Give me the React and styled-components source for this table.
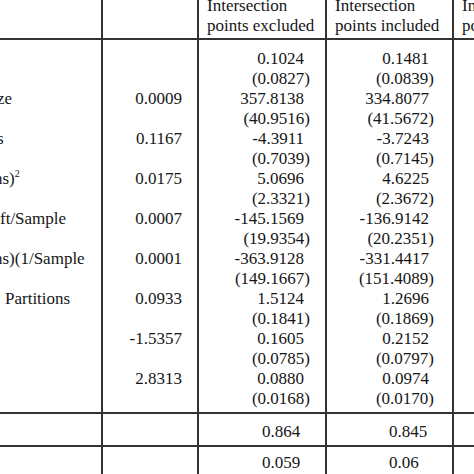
import React from 'react';
import styled, { createGlobalStyle } from 'styled-components';

const GlobalStyle = createGlobalStyle`
    *, *::before, *::after {
        box-sizing: border-box;
    }
    html, body {
        margin: 0;
        padding: 0;
        background: #fff;
        overflow: hidden;
    }
`

const COLS = '103px 96px 128px 127px 1fr';
const RULE = '2px solid #333';

const Page = styled.div`
    width: 474px;
    height: 474px;
    overflow: hidden;
    background: #fff;
    color: #161616;
    font-family: "Liberation Serif", "Times New Roman", serif;
    font-size: 17px;
    line-height: 20px;
`

const Row = styled.div`
    display: grid;
    grid-template-columns: ${COLS};
    grid-template-rows: minmax(0, 1fr);
    height: ${p => p.$h ? `${p.$h}px` : 'auto'};
    border-bottom: ${p => p.$rule ? RULE : 'none'};
    & > * {
        padding-top: ${p => p.$pt || 0}px;
        padding-bottom: ${p => p.$pb || 0}px;
    }
`

const Cell = styled.div`
    border-right: ${RULE};
    white-space: nowrap;
    overflow: hidden;
    &:last-child {
        border-right: none;
        overflow: visible;
    }
`

const HeadCell = styled(Cell)`
    display: flex;
    flex-direction: column;
    justify-content: flex-end;
    overflow: visible;
    padding-left: 8px;
    padding-bottom: 2px !important;
`

const Label = styled.div`
    height: 20px;
    margin-left: ${p => p.$shift || 0}px;
`

const Sup = styled.sup`
    font-size: 10px;
    line-height: 0;
    vertical-align: 7px;
`

const Num = styled.div`
    height: 20px;
    text-align: right;
    padding-right: ${p => p.$pr || 0}px;
`

const Stat = styled.div`
    padding-left: ${p => p.$pl || 0}px;
`

const rows = [
    { label: '', p: '', a: ['0.1024', '(0.0827)'], b: ['0.1481', '(0.0839)'] },
    { label: 'ze', shift: -3, p: '0.0009', a: ['357.8138', '(40.9516)'], b: ['334.8077', '(41.5672)'] },
    { label: 's', shift: -3, p: '0.1167', a: ['-4.3911', '(0.7039)'], b: ['-3.7243', '(0.7145)'] },
    { label: 'ns)', sup: '2', shift: -6, p: '0.0175', a: ['5.0696', '(2.3321)'], b: ['4.6225', '(2.3672)'] },
    { label: 'ft/Sample', shift: 0, p: '0.0007', a: ['-145.1569', '(19.9354)'], b: ['-136.9142', '(20.2351)'] },
    { label: 'ns)(1/Sample', shift: -6, p: '0.0001', a: ['-363.9128', '(149.1667)'], b: ['-331.4417', '(151.4089)'] },
    { label: 'Partitions', shift: 5, p: '0.0933', a: ['1.5124', '(0.1841)'], b: ['1.2696', '(0.1869)'] },
    { label: '', p: '-1.5357', a: ['0.1605', '(0.0785)'], b: ['0.2152', '(0.0797)'] },
    { label: '', p: '2.8313', a: ['0.0880', '(0.0168)'], b: ['0.0974', '(0.0170)'] },
];

function App() {
    return (
        <Page>
            <GlobalStyle />
            <Row $h={40} $rule>
                <HeadCell />
                <HeadCell />
                <HeadCell>
                    <div>Intersection</div>
                    <div>points excluded</div>
                </HeadCell>
                <HeadCell>
                    <div>Intersection</div>
                    <div>points included</div>
                </HeadCell>
                <HeadCell>
                    <div>Intersection</div>
                    <div>points</div>
                </HeadCell>
            </Row>

            {rows.map((r, i) => {
                const first = i === 0;
                const last = i === rows.length - 1;
                return (
                    <Row key={i} $pt={first ? 9 : 0} $pb={last ? 3 : 0} $rule={last}>
                        <Cell>
                            <Label $shift={r.shift}>
                                {r.label}
                                {r.sup && <Sup>{r.sup}</Sup>}
                            </Label>
                        </Cell>
                        <Cell>
                            <Num $pr={15}>{r.p}</Num>
                        </Cell>
                        <Cell>
                            <Num $pr={21}>{r.a[0]}</Num>
                            <Num $pr={15}>{r.a[1]}</Num>
                        </Cell>
                        <Cell>
                            <Num $pr={23}>{r.b[0]}</Num>
                            <Num $pr={18}>{r.b[1]}</Num>
                        </Cell>
                        <Cell />
                    </Row>
                );
            })}

            <Row $h={33} $pt={8} $rule>
                <Cell />
                <Cell />
                <Cell><Stat $pl={63}>0.864</Stat></Cell>
                <Cell><Stat $pl={62}>0.845</Stat></Cell>
                <Cell />
            </Row>
            <Row $h={40} $pt={6}>
                <Cell />
                <Cell />
                <Cell><Stat $pl={63}>0.059</Stat></Cell>
                <Cell><Stat $pl={62}>0.06</Stat></Cell>
                <Cell />
            </Row>
        </Page>
    );
}

export default App;
